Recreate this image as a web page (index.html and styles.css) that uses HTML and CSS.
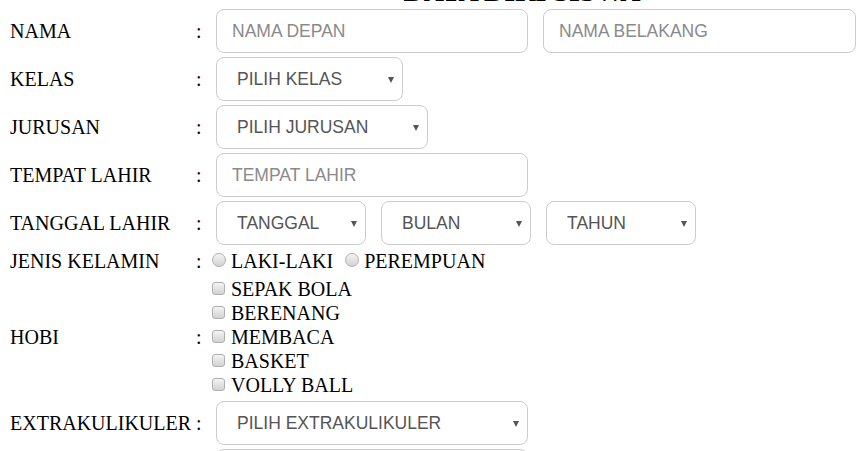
FILE: index.html
```html
<!DOCTYPE html>
<html>
<head>
<meta charset="utf-8">
<link rel="stylesheet" href="styles.css">
</head>
<body>
<div class="title">DATA DIRI SISWA</div>
<form class="form">
  <div class="label">NAMA</div><div class="colon">:</div>
  <div class="field">
    <input class="ctl w312" placeholder="NAMA DEPAN">
    <input class="ctl w313" placeholder="NAMA BELAKANG">
  </div>

  <div class="label">KELAS</div><div class="colon">:</div>
  <div class="field">
    <span class="sel"><select class="ctl w187"><option>PILIH KELAS</option></select></span>
  </div>

  <div class="label">JURUSAN</div><div class="colon">:</div>
  <div class="field">
    <span class="sel"><select class="ctl w212"><option>PILIH JURUSAN</option></select></span>
  </div>

  <div class="label">TEMPAT LAHIR</div><div class="colon">:</div>
  <div class="field">
    <input class="ctl w312" placeholder="TEMPAT LAHIR">
  </div>

  <div class="label">TANGGAL LAHIR</div><div class="colon">:</div>
  <div class="field">
    <span class="sel"><select class="ctl w150"><option>TANGGAL</option></select></span>
    <span class="sel"><select class="ctl w150"><option>BULAN</option></select></span>
    <span class="sel"><select class="ctl w150"><option>TAHUN</option></select></span>
  </div>

  <div class="label line">JENIS KELAMIN</div><div class="colon line">:</div>
  <div class="field choices">
    <label class="opt"><input type="radio" name="jk" class="rb">LAKI-LAKI</label>
    <label class="opt next"><input type="radio" name="jk" class="rb">PEREMPUAN</label>
  </div>

  <div class="label line">HOBI</div><div class="colon line">:</div>
  <div class="field stack">
    <label class="opt"><input type="checkbox" class="cb">SEPAK BOLA</label>
    <label class="opt"><input type="checkbox" class="cb">BERENANG</label>
    <label class="opt"><input type="checkbox" class="cb">MEMBACA</label>
    <label class="opt"><input type="checkbox" class="cb">BASKET</label>
    <label class="opt"><input type="checkbox" class="cb">VOLLY BALL</label>
  </div>

  <div class="label wide">EXTRAKULIKULER :</div>
  <div class="field">
    <span class="sel"><select class="ctl w312"><option>PILIH EXTRAKULIKULER</option></select></span>
  </div>

  <div class="label top">ALAMAT</div><div class="colon top">:</div>
  <div class="field">
    <textarea class="ctl area w312"></textarea>
  </div>
</form>
</body>
</html>
```
FILE: styles.css
```css
html, body {
  height: 100%;
}
body {
  margin: 0 0 0 10px;
  font-family: "Liberation Serif", "Times New Roman", serif;
  font-size: 20px;
  color: #000;
  background: #fff;
  overflow: hidden;
}
.title {
  margin: -25px 0 0 206px;
  width: 612px;
  text-align: center;
  font-weight: bold;
  font-size: 28px;
  line-height: 34px;
  height: 34px;
}
.form {
  display: grid;
  grid-template-columns: 185px 17px 1fr;
  row-gap: 4px;
  align-items: center;
  margin-top: 0;
}
.label {
  white-space: nowrap;
  line-height: 24px;
}
.label.wide {
  grid-column: 1 / span 2;
}
.colon {
  padding-left: 1px;
  line-height: 24px;
}
.top {
  align-self: start;
  padding-top: 10px;
}
.field {
  display: flex;
  gap: 15px;
  align-items: center;
}
.field > .ctl, .field > .sel {
  flex: none;
}
.field > :first-child.ctl, .field > :first-child.sel {
  margin-left: 4px;
}
.ctl {
  box-sizing: border-box;
  height: 44px;
  border: 1px solid #ccc;
  border-radius: 8px;
  background: #fff;
  font-family: "Liberation Sans", Arial, sans-serif;
  font-size: 17.5px;
  color: #555;
  padding: 0 15px;
  margin: 0;
  outline: none;
}
.ctl::placeholder {
  color: #8a8a8a;
}
select.ctl {
  -webkit-appearance: none;
  appearance: none;
  padding-left: 20px;
}
.area {
  height: 90px;
  padding-top: 10px;
  resize: none;
  display: block;
}
.sel {
  position: relative;
  display: inline-block;
}
.sel::after {
  content: "";
  position: absolute;
  right: 9px;
  top: 50%;
  margin-top: -2px;
  border-left: 3.5px solid transparent;
  border-right: 3.5px solid transparent;
  border-top: 6px solid #555;
}
.w150 { width: 150px; }
.w187 { width: 187px; }
.w212 { width: 212px; }
.w312 { width: 312px; }
.w313 { width: 313px; }
.choices {
  gap: 0;
}
.stack {
  flex-direction: column;
  align-items: flex-start;
  gap: 0;
}
.opt {
  display: flex;
  align-items: center;
  height: 24px;
  line-height: 24px;
  white-space: nowrap;
}
.opt.next {
  margin-left: 12px;
}
.cb, .rb {
  -webkit-appearance: none;
  appearance: none;
  box-sizing: border-box;
  margin: 0 6px 0 0;
  background: linear-gradient(#f4f4f4, #d2d2d2);
  border: 1px solid #b0b0b0;
}
.cb {
  width: 13px;
  height: 13px;
  border-radius: 3px;
  position: relative;
  top: -1px;
}
.rb {
  width: 14px;
  height: 14px;
  border-radius: 50%;
  margin-right: 5px;
  position: relative;
  top: -1px;
}
```
